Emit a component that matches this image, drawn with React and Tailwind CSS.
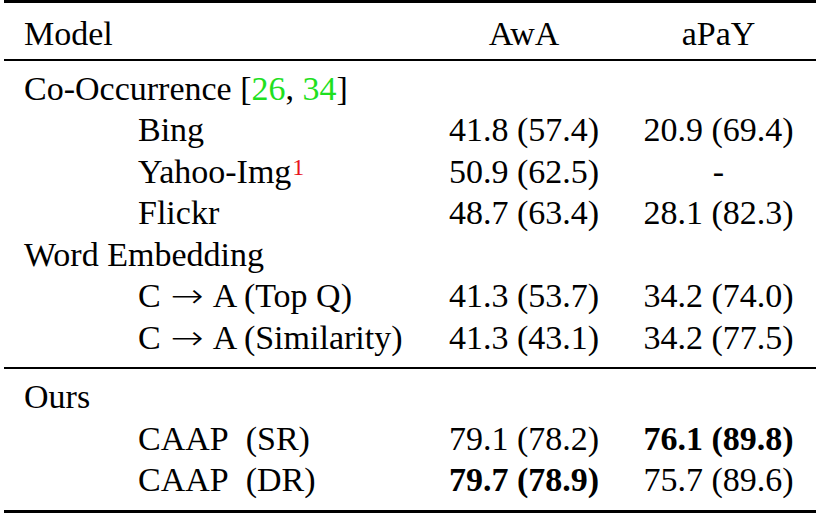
const groups = [
  {
    rows: [
      { label: "Co-Occurrence", cite: true },
      { label: "Bing", indent: true, awa: "41.8 (57.4)", apay: "20.9 (69.4)" },
      { label: "Yahoo-Img", note: "1", indent: true, awa: "50.9 (62.5)", apay: "-" },
      { label: "Flickr", indent: true, awa: "48.7 (63.4)", apay: "28.1 (82.3)" },
      { label: "Word Embedding" },
      { label: "(Top Q)", arrow: true, indent: true, awa: "41.3 (53.7)", apay: "34.2 (74.0)" },
      { label: "(Similarity)", arrow: true, indent: true, awa: "41.3 (43.1)", apay: "34.2 (77.5)" },
    ],
  },
  {
    rows: [
      { label: "Ours" },
      { label: "CAAP\u00a0\u00a0(SR)", indent: true, awa: "79.1 (78.2)", apay: "76.1 (89.8)", boldApay: true },
      { label: "CAAP\u00a0\u00a0(DR)", indent: true, awa: "79.7 (78.9)", apay: "75.7 (89.6)", boldAwa: true },
    ],
  },
];

export default function App() {
  return (
    <div className="h-[515px] w-[818px] overflow-hidden bg-white pl-[4px] font-['Liberation_Serif',serif] text-[34px] text-black">
      <div className="w-[812px]">
        <div className="h-[3px] bg-black" />
        <div className="pt-[10px] pb-[4px]">
          <Row label="Model" awa="AwA" apay="aPaY" />
        </div>
        <div className="h-[2px] bg-black" />
        {groups.map((group, i) => (
          <div key={i}>
            <div className="pt-[7px] pb-[9px]">
              {group.rows.map((row) => (
                <Row key={row.label} {...row} />
              ))}
            </div>
            <div className={i === groups.length - 1 ? "h-[3px] bg-black" : "h-[2px] bg-black"} />
          </div>
        ))}
      </div>
    </div>
  );
}

function Row({ label, indent, cite, note, arrow, awa, apay, boldAwa, boldApay }) {
  return (
    <div className="grid h-[41.5px] grid-cols-[423px_194px_195px] leading-[41.5px] whitespace-nowrap">
      <div className={indent ? "pl-[134px]" : "pl-[20px]"}>
        {arrow && (
          <>
            C
            <span className="mx-[9px] inline-block w-[34px] scale-x-[1.2] text-center font-['DejaVu_Sans',sans-serif] text-[33px] font-extralight">
              →
            </span>
            {"A "}
          </>
        )}
        {label}
        {cite && (
          <>
            {" ["}
            <span className="text-[#1fe01f]">26</span>, <span className="text-[#1fe01f]">34</span>]
          </>
        )}
        {note && <sup className="-top-[8px] ml-[1px] align-baseline text-[24px] text-[#e8141c]">{note}</sup>}
      </div>
      <div className={boldAwa ? "text-center font-bold" : "text-center"}>{awa}</div>
      <div className={boldApay ? "text-center font-bold" : "text-center"}>{apay}</div>
    </div>
  );
}
